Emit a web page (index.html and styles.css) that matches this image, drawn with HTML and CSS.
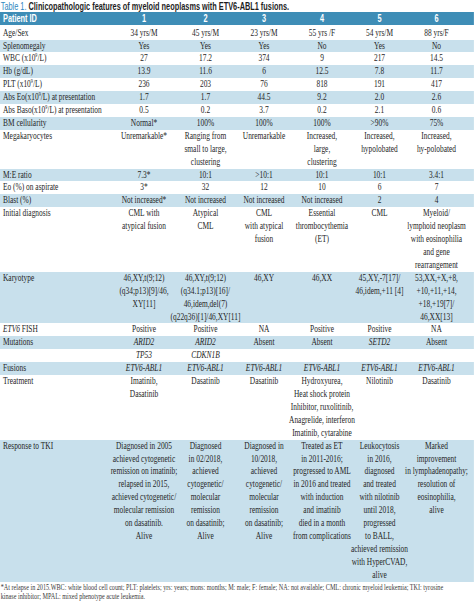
FILE: index.html
```html
<!DOCTYPE html>
<html>
<head>
<meta charset="utf-8">
<link rel="stylesheet" href="styles.css">
</head>
<body>
<div class="page">
  <p class="title"><span class="tnum">Table 1.</span> Clinicopathologic features of myeloid neoplasms with ETV6-ABL1 fusions.</p>
  <div class="table">
    <div class="row head"><div class="lab">Patient ID</div><div>1</div><div>2</div><div>3</div><div>4</div><div>5</div><div>6</div></div>
    <div class="row first"><div class="lab">Age/Sex</div><div>34 yrs/M</div><div>45 yrs/M</div><div>23 yrs/M</div><div>55 yrs /F</div><div>54 yrs/M</div><div>88 yrs/F</div></div>
    <div class="row alt"><div class="lab">Splenomegaly</div><div>Yes</div><div>Yes</div><div>Yes</div><div>No</div><div>Yes</div><div>No</div></div>
    <div class="row"><div class="lab">WBC (x10<sup>9</sup>/L)</div><div>27</div><div>17.2</div><div>374</div><div>9</div><div>217</div><div>14.5</div></div>
    <div class="row alt"><div class="lab">Hb (g/dL)</div><div>13.9</div><div>11.6</div><div>6</div><div>12.5</div><div>7.8</div><div>11.7</div></div>
    <div class="row"><div class="lab">PLT (x10<sup>9</sup>/L)</div><div>236</div><div>203</div><div>76</div><div>818</div><div>191</div><div>417</div></div>
    <div class="row alt"><div class="lab">Abs Eo(x10<sup>9</sup>/L) at presentation</div><div>1.7</div><div>1.7</div><div>44.5</div><div>9.2</div><div>2.0</div><div>2.6</div></div>
    <div class="row"><div class="lab">Abs Baso(x10<sup>9</sup>/L) at presentation</div><div>0.5</div><div>0.2</div><div>3.7</div><div>0.2</div><div>2.1</div><div>0.6</div></div>
    <div class="row alt"><div class="lab">BM cellularity</div><div>Normal*</div><div>100%</div><div>100%</div><div>100%</div><div>&gt;90%</div><div>75%</div></div>
    <div class="row"><div class="lab">Megakaryocytes</div><div>Unremarkable*</div><div>Ranging from<br>small to large,<br>clustering</div><div>Unremarkable</div><div>Increased,<br>large,<br>clustering</div><div>Increased,<br>hypolobated</div><div>Increased,<br>hy-polobated</div></div>
    <div class="row alt"><div class="lab">M:E ratio</div><div>7.3*</div><div>10:1</div><div>&gt;10:1</div><div>10:1</div><div>10:1</div><div>3.4:1</div></div>
    <div class="row"><div class="lab">Eo (%) on aspirate</div><div>3*</div><div>32</div><div>12</div><div>10</div><div>6</div><div>7</div></div>
    <div class="row alt"><div class="lab">Blast (%)</div><div>Not increased*</div><div>Not increased</div><div>Not increased</div><div>Not increased</div><div>2</div><div>4</div></div>
    <div class="row"><div class="lab">Initial diagnosis</div><div>CML with<br>atypical fusion</div><div>Atypical<br>CML</div><div>CML<br>with atypical<br>fusion</div><div>Essential<br>thrombocythemia<br>(ET)</div><div>CML</div><div>Myeloid/<br>lymphoid neoplasm<br>with eosinophilia<br>and gene<br>rearrangement</div></div>
    <div class="row alt"><div class="lab">Karyotype</div><div>46,XY,t(9;12)<br>(q34;p13)[9]/46,<br>XY[11]</div><div>46,XY,t(9;12)<br>(q34.1;p13)[16]/<br>46,idem,del(7)<br>(q22q36)[1]/46,XY[11]</div><div>46,XY</div><div>46,XX</div><div>45,XY,-7[17]/<br>46,idem,+11 [4]</div><div>53,XX,+X,+8,<br>+10,+11,+14,<br>+18,+19[7]/<br>46,XX[13]</div></div>
    <div class="row"><div class="lab"><i>ETV6</i> FISH</div><div>Positive</div><div>Positive</div><div>NA</div><div>Positive</div><div>Positive</div><div>NA</div></div>
    <div class="row alt"><div class="lab">Mutations</div><div><i>ARID2</i></div><div><i>ARID2</i></div><div>Absent</div><div>Absent</div><div><i>SETD2</i></div><div>Absent</div></div>
    <div class="row"><div class="lab"></div><div><i>TP53</i></div><div><i>CDKN1B</i></div><div></div><div></div><div></div><div></div></div>
    <div class="row alt"><div class="lab">Fusions</div><div><i>ETV6-ABL1</i></div><div><i>ETV6-ABL1</i></div><div><i>ETV6-ABL1</i></div><div><i>ETV6-ABL1</i></div><div><i>ETV6-ABL1</i></div><div><i>ETV6-ABL1</i></div></div>
    <div class="row"><div class="lab">Treatment</div><div>Imatinib,<br>Dasatinib</div><div>Dasatinib</div><div>Dasatinib</div><div>Hydroxyurea,<br>Heat shock protein<br>Inhibitor, ruxolitinib,<br>Anagrelide, interferon<br>Imatinib, cytarabine</div><div>Nilotinib</div><div>Dasatinib</div></div>
    <div class="row alt"><div class="lab">Response to TKI</div><div>Diagnosed in 2005<br>achieved cytogenetic<br>remission on imatinib;<br>relapsed in 2015,<br>achieved cytogenetic/<br>molecular remission<br>on dasatinib.<br>Alive</div><div>Diagnosed<br>in 02/2018,<br>achieved<br>cytogenetic/<br>molecular<br>remission<br>on dasatinib;<br>Alive</div><div>Diagnosed in<br>10/2018,<br>achieved<br>cytogenetic/<br>molecular<br>remission<br>on dasatinib;<br>Alive</div><div>Treated as ET<br>in 2011-2016;<br>progressed to AML<br>in 2016 and treated<br>with induction<br>and imatinib<br>died in a month<br>from complications</div><div>Leukocytosis<br>in 2016,<br>diagnosed<br>and treated<br>with nilotinib<br>until 2018,<br>progressed<br>to BALL,<br>achieved remission<br>with HyperCVAD,<br>alive</div><div>Marked<br>improvement<br>in lymphadenopathy;<br>resolution of<br>eosinophilia,<br>alive</div></div>
  </div>
  <p class="foot">*At relapse in 2015.WBC: white blood cell count; PLT: platelets; yrs: years; mons: months; M: male; F: female; NA: not available; CML: chronic myeloid leukemia; TKI: tyrosine<br>kinase inhibitor; MPAL: mixed phenotype acute leukemia.</p>
</div>
</body>
</html>
```

FILE: styles.css
```css
html, body {
  margin: 0;
  padding: 0;
  background: #ffffff;
  overflow: hidden;
}

.page {
  width: 677.14px;
  transform: scaleX(0.7);
  transform-origin: 0 0;
  font-family: "Liberation Serif", "Times New Roman", serif;
  color: #262626;
}

.title {
  margin: 0;
  height: 12px;
  line-height: 12px;
  font-family: "Liberation Sans Narrow", "Liberation Sans", Arial, sans-serif;
  font-weight: bold;
  font-size: 10.5px;
  color: #1e1e1e;
  white-space: nowrap;
  padding-left: 1px;
}

.tnum {
  color: #2f87bf;
  font-weight: normal;
}

.row {
  display: grid;
  grid-template-columns: 160px 91.43px 84.29px 82.86px 82.86px 81.43px 81.43px;
  font-size: 10.6px;
  line-height: 12.9px;
}

.row > div {
  display: flex;
  flex-direction: column;
  align-items: center;
  text-align: center;
  white-space: nowrap;
}

.row > .lab {
  display: block;
  text-align: left;
  padding-left: 4.3px;
}

.row sup {
  font-size: 6px;
  line-height: 0;
  vertical-align: 4px;
}

.head {
  background: #3e8db6;
  color: #ffffff;
  font-family: "Liberation Sans Narrow", "Liberation Sans", Arial, sans-serif;
  font-weight: bold;
  font-size: 10.5px;
  line-height: 12.5px;
  height: 12.5px;
}

.first {
  height: 15px;
  padding-top: 2px;
  box-sizing: border-box;
}

.alt {
  background: #c8e0ec;
}

.foot {
  margin: 0;
  padding-top: 1px;
  padding-left: 1px;
  font-size: 8.8px;
  line-height: 9px;
  color: #3a3a3a;
  white-space: nowrap;
}
```
